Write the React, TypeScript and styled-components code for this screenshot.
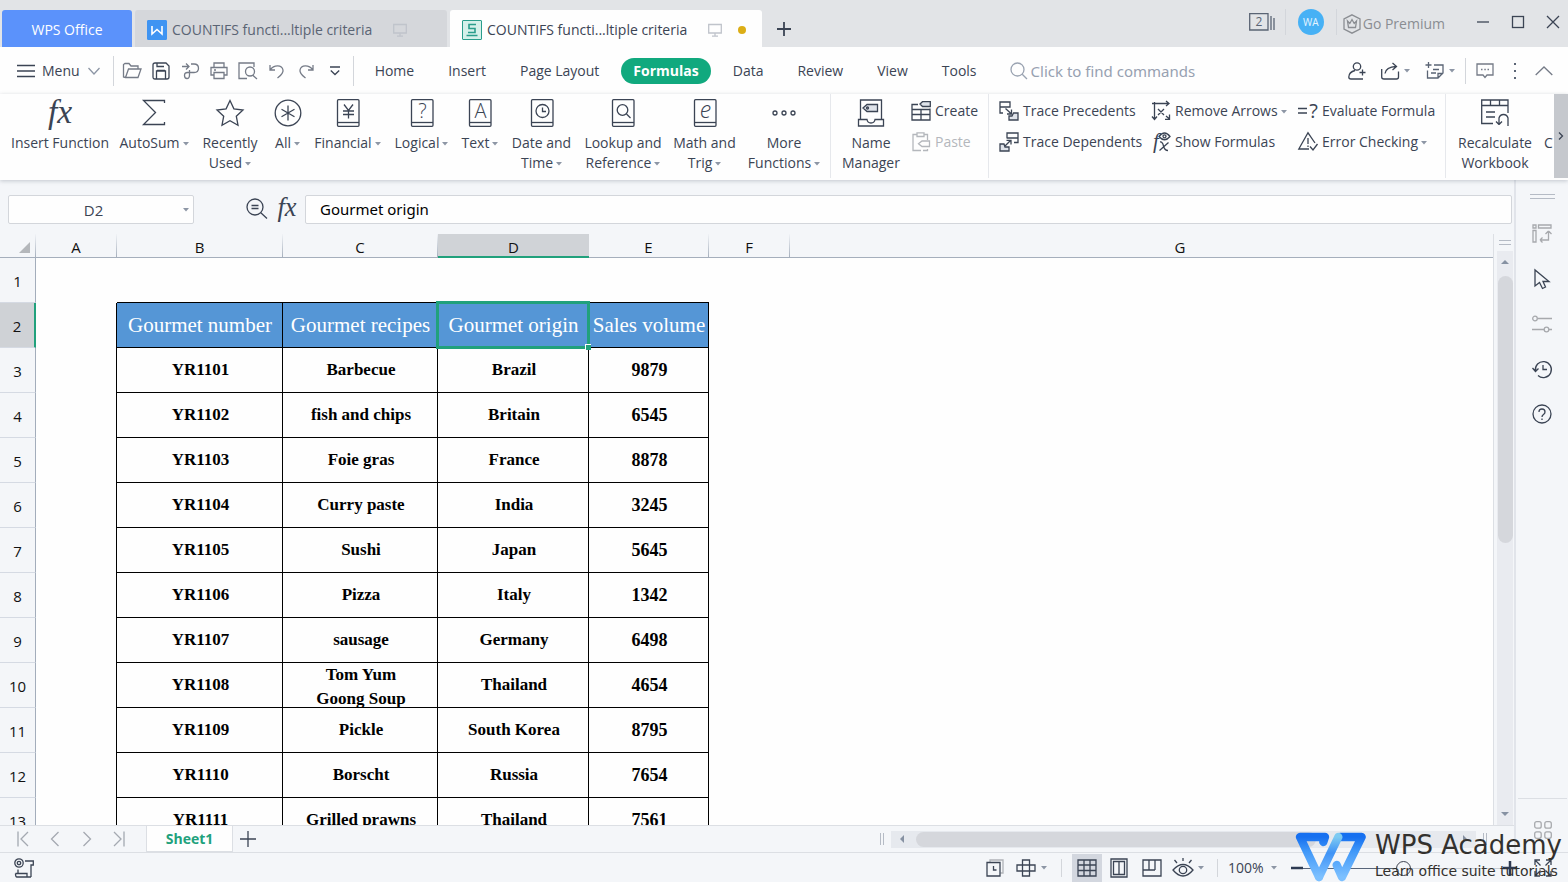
import React, { ReactNode } from 'react';
import styled, { createGlobalStyle, css } from 'styled-components';

const ui = '"Open Sans", "Noto Sans", sans-serif';
const ink = '#3b4454';
const green = '#21a17c';
const line = '#dcdfe4';

const GlobalStyle = createGlobalStyle`
  *, *::before, *::after { box-sizing: border-box; }
  body { margin: 0; background: #f4f6f9; color: ${ink}; font-family: ${ui}; font-size: 14px; line-height: 20px; overflow: hidden; }
  button, input, select { font: inherit; color: inherit; margin: 0; padding: 0; border: 0; background: none; }
  button { cursor: pointer; }
  svg { display: block; flex: none; }
`;

/* ---------- icons ---------- */

const Glyph = styled.svg`
  fill: none;
  stroke: currentColor;
  stroke-width: 1.3;
  overflow: visible;
  text {
    fill: currentColor;
    stroke: none;
    text-anchor: middle;
  }
`;

type IconProps = { w: number; h: number; children: ReactNode };
const Icon = ({ w, h, children }: IconProps) => (
  <Glyph width={w} height={h} viewBox={`0 0 ${w} ${h}`} aria-hidden="true">{children}</Glyph>
);

const CaretSvg = styled.svg`
  display: inline-block;
  vertical-align: middle;
  margin-left: 3px;
  fill: #8d96a5;
`;
const Caret = () => (
  <CaretSvg width="6" height="4" viewBox="0 0 6 4" aria-hidden="true"><path d="M0 0H6L3 3.5Z" /></CaretSvg>
);

const Monitor = () => (
  <Icon w={14} h={14}><path d="M.7 1.5H13.3V10H.7ZM7 10V13M4 13.2H10" /></Icon>
);
const Fx = ({ size = 28 }: { size?: number }) => (
  <Icon w={size} h={size}>
    <text x={size / 2} y={size * 0.84} fontSize={size * 1.2} fontStyle="italic" fontFamily="Liberation Serif, serif">fx</text>
  </Icon>
);
const Book = ({ children }: { children: ReactNode }) => (
  <Icon w={28} h={28}>
    <rect x="3.5" y=".7" width="21.5" height="26.6" rx="1" />
    <path d="M3.5 23.5H25" />
    {children}
  </Icon>
);
const BookText = ({ children, italic }: { children: string; italic?: boolean }) => (
  <Book>
    <text x="14.5" y="19" fontSize={italic ? 23 : 20} fontStyle={italic ? 'italic' : 'normal'} fontFamily="Open Sans, sans-serif" fontWeight="300">{children}</text>
  </Book>
);

const icons = {
  hamburger: <Icon w={18} h={14}><path d="M0 1.5H18M0 7H18M0 12.5H18" /></Icon>,
  chevronDown: <Icon w={12} h={8}><path d="M.5 1L6 7L11.5 1" /></Icon>,
  folder: <Icon w={20} h={18}><path d="M3.5 15.5L1.5 15V2.5L3 1.5H7L9 4H16V6.5M3.5 15.5L6.5 7H19L16 15.5Z" /></Icon>,
  save: <Icon w={18} h={18}><path d="M1 3Q1 1 3 1H14L17 4V15Q17 17 15 17H3Q1 17 1 15ZM4.5 17V9H13.5V17M5 1V4.5H12M5 8.5H13" /></Icon>,
  pdf: <Icon w={19} h={18}><path d="M1 4.500H8M5 1.500L8 4.500L5 7.500M10 2H13Q17.500 2 17.500 6.200T13 10.500H6.500Q3.500 10.500 3.500 13.500T6 16.500Q8.500 16.500 8.500 13V8" /></Icon>,
  print: <Icon w={18} h={18}><path d="M4 5V1H14V5M4 13H1V5.500H17V13H14M4 10.500H14V16.500H4ZM4 8H6" /></Icon>,
  preview: <Icon w={20} h={18}><path d="M16 5V1H1V16.500H9M14.500 13L19 17" /><circle cx="12" cy="9.500" r="4.500" /></Icon>,
  undo: <Icon w={16} h={16}><path d="M1 2V7H6M1.300 6.700C5 1.500 13 1.500 14 7C14.600 10.500 11 13 8.500 15" /></Icon>,
  redo: <Icon w={16} h={16}><path d="M15 2V7H10M14.700 6.700C11 1.500 3 1.500 2 7C1.400 10.500 5 13 7.500 15" /></Icon>,
  more: <Icon w={10} h={10}><path d="M0 1H10M.800 4.500L5 8.500L9.200 4.500" /></Icon>,
  search: <Icon w={18} h={18}><circle cx="7.500" cy="7.500" r="6.500" /><path d="M12.200 12.200L17 17" /></Icon>,
  sigma: <Icon w={28} h={28}><path d="M24.500 4V1.500H3.500L15.500 13.500L3.500 25.500H24.500V23" /></Icon>,
  star: <Icon w={28} h={28}><path d="M14 1.500L17.900 9.800L27 11L20.300 17.200L22 26.200L14 21.800L6 26.200L7.700 17.200L1 11L10.100 9.800Z" /></Icon>,
  all: <Icon w={28} h={28}><circle cx="14" cy="14" r="12.800" /><path d="M14 6.500V21.500M7.500 10.200L20.500 17.800M7.500 17.800L20.500 10.200" /></Icon>,
  yen: <Book><path d="M10 5.500L14.500 11.500L19 5.500M14.500 11.500V19.500M9 12H20M9 15.500H20" /></Book>,
  logical: <BookText>?</BookText>,
  letter: <BookText>A</BookText>,
  clock: <Book><circle cx="14.500" cy="12" r="6.500" /><path d="M14.500 8.500V12.500H18" /></Book>,
  lookup: <Book><circle cx="13.500" cy="11" r="5.300" /><path d="M17.500 15L21.500 19" /></Book>,
  math: <BookText italic>e</BookText>,
  dots: <Icon w={28} h={28}><circle cx="5" cy="14" r="2" /><circle cx="14" cy="14" r="2" /><circle cx="23" cy="14" r="2" /></Icon>,
  nameManager: <Icon w={28} h={28}><path d="M3.500 20V1H24.500V20M1.500 20.500H10Q10.500 24 14 24T18 20.500H26.500V27H1.500Z" /><path d="M6 9L10 5.500H20.500V12.500H10Z" fill="#dfe3ea" /><circle cx="10.500" cy="9" r="1" /></Icon>,
  create: <Icon w={20} h={20}><path d="M7 3.500H1V19H19V7.500M1 8.500H19M1 13.500H19M10 8.500V19" /><path d="M9 3L11.500 .700H19.300V5.500H11.500Z" fill="#dfe3ea" /></Icon>,
  paste: <Icon w={20} h={20}><path d="M6 2.500H2V18.500H10M13 2.500H16.500V8M6 .800H13V4.500H6ZM11 9H18.500V14.500H11L7.500 11.800ZM12 18.500H16.500V17" /></Icon>,
  precedents: <Icon w={20} h={20}><path d="M4 12H1V1H11V6H1M6.500 7.500L12 12.500M12.500 8.500V13H8" /><path d="M10 19V15H13L14.500 12H19V19Z" fill="#dfe3ea" /></Icon>,
  dependents: <Icon w={20} h={20}><path d="M8 6.500V1H19V10.500H15M8 6H19M6 14L11.500 8.500M7.500 8.300H12V12.500" /><path d="M1 12H5L6 15H10V19H1Z" fill="#dfe3ea" /></Icon>,
  removeArrows: <Icon w={20} h={20}><path d="M1 2.500H18M15 0L18 2.500L15 5M3.500 1V18.500M1 15.500L3.500 18.500L6 15.500M7 8L13 14M13 8L7 14M15 15L18.500 18M18.500 13.500V18.300H14" /></Icon>,
  showFormulas: <Icon w={20} h={20}><text x="5" y="16" fontSize="21" fontStyle="italic" fontFamily="Liberation Serif, serif">f</text><path d="M9 10Q11.500 9.500 12.500 14T17 18.500M17.500 10.500L8.500 18.500" /><path d="M8 4.500Q13.500-2.500 19 4.500Q13.500 11 8 4.500Z" /><circle cx="13.500" cy="4.300" r="1.500" /></Icon>,
  evaluate: <Icon w={20} h={20}><path d="M0 7.500H9M0 12H9" /><text x="15.500" y="17" fontSize="20" fontFamily="Open Sans, sans-serif">?</text></Icon>,
  errorCheck: <Icon w={20} h={20}><path d="M17 11L10 .800L.800 17H11M10 6V12M10 13.500V15M12 14.500L15 18L19.500 12" /></Icon>,
  recalc: <Icon w={28} h={28}><path d="M27 14V1H.700V24.500H12M.700 6.500H27M9.500 1V6.500M18.500 1V6.500M5 13H14M5 18H14M18 25.500L15 22.500M18 25.500L21 22.500M18 25V19Q19 15.500 22.500 15.500T27 19V27" /></Icon>,
  addUser: <Icon w={18} h={18}><circle cx="9" cy="4.500" r="3.700" /><path d="M7 8.500Q1 10 .800 15Q.800 17 3 17H15M14.500 7.500V13.500M11.500 10.500H17.500" /></Icon>,
  share: <Icon w={18} h={18}><path d="M.700 7V15Q.700 17 3 17H15.500Q17.500 17 17.500 15V9.500M4 11.500Q5 5 15 4.500M11.500 1L15.500 4.500L11.500 8" /></Icon>,
  noteAdd: <Icon w={19} h={17}><path d="M3.500 0V6M.500 3H6.500M9 3H18V11L13 16H2.500V8.500M13 16V11.500H18M8 7.500H14M6 11H11" /></Icon>,
  comment: <Icon w={18} h={16}><path d="M1 1H17V12H11L9 14.500L7 12H1Z" /><path d="M5 6.500H6.500M8.300 6.500H9.800M11.500 6.500H13" /></Icon>,
  kebab: <Icon w={4} h={18}><path d="M1 2H3M1 9H3M1 16H3" strokeWidth="2" /></Icon>,
  chevronUp: <Icon w={18} h={10}><path d="M.700 9L9 1L17.300 9" /></Icon>,
  windows: <Icon w={26} h={18}><path d="M.700 .700H19V17H.700ZM22 3V17M25 5V17" /><text x="10" y="13" fontSize="12" fontFamily="Open Sans, sans-serif">2</text></Icon>,
  crown: <Icon w={18} h={20}><path d="M9 .800L17 5V15L9 19.200L1 15V5ZM4.500 7L6.800 9.500L9 5.500L11.200 9.500L13.500 7L12.500 13.500H5.500Z" /></Icon>,
  minimize: <Icon w={14} h={14}><path d="M1 7H13" /></Icon>,
  maximize: <Icon w={14} h={14}><rect x="1.500" y="1.500" width="11" height="11" /></Icon>,
  close: <Icon w={14} h={14}><path d="M1 1L13 13M13 1L1 13" /></Icon>,
  plus: <Icon w={16} h={16}><path d="M8 0V16M0 8H16" /></Icon>,
  zoomOut: <Icon w={22} h={22}><circle cx="9" cy="9" r="8" /><path d="M14.800 14.800L21 20.500M5.500 7.500H12.500M5.500 10.500H12.500" /></Icon>,
  panelSwap: <Icon w={20} h={20}><path d="M1 1H4V4H1ZM6.500 1H19V4H6.500ZM1 6.500H4V18H1ZM16.500 7V16H8M16.500 7L13.500 10M16.500 7L19.500 10M8 16L10.500 13.500M8 16L10.500 18.500" /></Icon>,
  pointer: <Icon w={16} h={20}><path d="M1 1V17L5.500 13.500L8.500 19.500L11.500 18L9 12.500H15Z" /></Icon>,
  sliders: <Icon w={20} h={16}><circle cx="3" cy="2.500" r="2.300" /><circle cx="14.500" cy="13.500" r="2.300" /><path d="M5.500 2.500H20M0 13.500H12M17 13.500H20" /></Icon>,
  history: <Icon w={20} h={18}><path d="M3.500 11A8 8 0 1 1 6 15.500M.500 8L3.500 11.500L6.500 8.500M11 5V9.500H15" /></Icon>,
  help: <Icon w={20} h={20}><circle cx="10" cy="10" r="9" /><path d="M7 8Q7 5 10 5T13 8Q13 9.500 11.500 10.500T10 13M10 14.500V16" /></Icon>,
  apps: <Icon w={18} h={18}><rect x=".700" y=".700" width="6.500" height="6.500" rx="2" /><rect x="10.800" y=".700" width="6.500" height="6.500" rx="2" /><rect x=".700" y="10.800" width="6.500" height="6.500" rx="2" /><rect x="10.800" y="10.800" width="6.500" height="6.500" rx="2" /></Icon>,
  first: <Icon w={12} h={16}><path d="M1 .500V15.500M11 1L4 8L11 15" /></Icon>,
  prev: <Icon w={12} h={16}><path d="M9.500 1L2.500 8L9.500 15" /></Icon>,
  next: <Icon w={12} h={16}><path d="M2.500 1L9.500 8L2.500 15" /></Icon>,
  last: <Icon w={12} h={16}><path d="M11 .500V15.500M1 1L8 8L1 15" /></Icon>,
  macro: <Icon w={20} h={20}><circle cx="5" cy="5" r="4.200" /><circle cx="5" cy="5" r="1.700" /><path d="M11 3H19.300V7H17V19M4 11.500V15.500M1.500 15.500H13V19H3Q1.500 19 1.500 15.500M13 19H17" /></Icon>,
  recover: <Icon w={18} h={18}><path d="M4 3V1H17V14H14.500" stroke="#b0b3b8" /><path d="M1 3.500H14V17H1ZM7.500 7V11H10.500" /></Icon>,
  cross: <Icon w={20} h={18}><path d="M6.500 1H13.500V17H6.500ZM1 6H19V12H1Z" /></Icon>,
  grid: <Icon w={20} h={18}><path d="M1 1H19V17H1ZM1 6H19M1 11.500H19M7 1V17M13 1V17" /></Icon>,
  pages: <Icon w={18} h={20}><path d="M1 1H17V19H1ZM3.500 3.500H14.500V16.500H3.500ZM9 3.500V16.500" /></Icon>,
  breaks: <Icon w={20} h={18}><path d="M1 1H19V17H1ZM7 1V11M13 1V11M1 11H13" /></Icon>,
  eye: <Icon w={20} h={20}><path d="M0 12Q10 1 20 12Q10 24 0 12ZM10 0V3M1.500 2L4 5M18.500 2L16 5" /><circle cx="10" cy="12" r="3.700" /></Icon>,
  fullscreen: <Icon w={18} h={18}><path d="M1 6V1H6M1 1L6.500 6.500M12 1H17V6M17 1L11.500 6.500M1 12V17H6M1 17L6.500 11.500M17 12V17H12M17 17L11.500 11.500" /></Icon>,
};

/* ---------- frame ---------- */

const Window = styled.div`
  height: 100vh;
  display: flex;
  flex-direction: column;
  position: relative;
  overflow: hidden;
`;

const TitleBar = styled.header`
  display: flex;
  align-items: flex-end;
  gap: 3px;
  height: 47px;
  padding: 0 8px 0 2px;
  background: #e2e4e7;
  flex: none;
`;

const HomeTab = styled.button`
  width: 130px;
  height: 37px;
  padding-top: 2px;
  border-radius: 3px 3px 0 0;
  background: #5b92fb;
  color: #fff;
`;

const DocTab = styled.button<{ $active?: boolean }>`
  display: flex;
  align-items: center;
  width: 312px;
  height: 37px;
  padding: 2px 12px 0;
  border-radius: 3px 3px 0 0;
  background: ${p => (p.$active ? '#fefefe' : '#d5d7db')};
  color: ${p => (p.$active ? ink : '#5a6474')};
  white-space: nowrap;
  & > span { margin: 0 21px 0 5px; }
  & > svg { color: #c0c4cb; }
`;

const FileBadge = styled.i<{ $sheet?: boolean }>`
  width: 20px;
  height: 20px;
  flex: none;
  border-radius: 1px;
  border: 1px solid ${p => (p.$sheet ? '#2a9d8c' : '#3f94f2')};
  background: ${p => (p.$sheet ? '#d5f0ea' : '#3f94f2')};
  color: ${p => (p.$sheet ? '#2a9d8c' : '#fff')};
`;

const Unsaved = styled.i`
  width: 8px;
  height: 8px;
  margin-left: 16px;
  border-radius: 50%;
  background: #dcae16;
`;

const IconButton = styled.button<{ $w?: number; $tone?: string; $on?: boolean }>`
  display: flex;
  align-items: center;
  justify-content: center;
  gap: 2px;
  flex: none;
  min-width: ${p => p.$w ?? 28}px;
  align-self: stretch;
  color: ${p => p.$tone ?? ink};
  background: ${p => (p.$on ? '#d3d7df' : 'none')};
`;

const WindowTools = styled.div`
  display: flex;
  align-items: center;
  align-self: flex-start;
  height: 44px;
  margin-left: auto;
`;

const Avatar = styled.button`
  width: 26px;
  height: 26px;
  margin: 0 12px;
  border-radius: 50%;
  background: #47b1f5;
  color: #e6f5ff;
  font-size: 10px;
`;

const Premium = styled.button`
  display: flex;
  align-items: center;
  gap: 2px;
  margin: 3px 31px 0 6px;
  color: #8a8d92;
`;

const WindowButtons = styled.div`
  display: flex;
  gap: 21px;
`;

const Rule = styled.i<{ $h?: number }>`
  width: 1px;
  height: ${p => p.$h ?? 26}px;
  flex: none;
  background: #d3d6db;
`;

/* ---------- menu bar ---------- */

const MenuBar = styled.nav`
  display: flex;
  align-items: center;
  height: 47px;
  padding: 0 6px 0 17px;
  background: #fefefe;
  flex: none;
`;

const MenuButton = styled.button`
  display: flex;
  align-items: center;
  gap: 7px;
  margin-right: 13px;
  & > svg:last-child { margin-left: 1px; color: #8d96a5; }
`;

const QuickTools = styled.div`
  display: flex;
  height: 26px;
  margin: 0 3px 0 4px;
`;

const Tabs = styled.div`
  display: flex;
  gap: 10px;
  margin-left: 9px;
`;

const Tab = styled.button<{ $active?: boolean }>`
  height: 26px;
  padding: 0 12px;
  border-radius: 13px;
  white-space: nowrap;
  ${p => p.$active && css`
    background: #11a97e;
    color: #fff;
    font-weight: 700;
  `}
`;

const Search = styled.label`
  display: flex;
  align-items: center;
  gap: 3px;
  flex: 1;
  min-width: 0;
  margin-left: 21px;
  color: #9aa3b1;
  font-family: "Noto Sans", sans-serif;
  font-size: 15px;
  input { flex: 1; min-width: 0; outline: 0; }
  input::placeholder { color: #97a1b1; opacity: 1; }
`;

const MenuRight = styled.div`
  display: flex;
  align-items: center;
  height: 26px;
`;

/* ---------- ribbon ---------- */

const Ribbon = styled.section`
  display: flex;
  height: 86px;
  padding-left: 6px;
  background: #fefefe;
  box-shadow: 0 1px 4px rgba(80, 90, 105, 0.3);
  flex: none;
  position: relative;
`;

const BigButton = styled.button<{ $w: number }>`
  display: flex;
  flex-direction: column;
  align-items: center;
  flex: none;
  width: ${p => p.$w}px;
  padding-top: 5px;
  white-space: nowrap;
  & > span { margin-top: 6px; }
`;

const RibbonRule = styled(Rule)`
  height: 84px;
  margin: 0 5px;
  background: #e6e8ec;
`;

const SmallColumn = styled.div<{ $w: number; $inset?: boolean }>`
  display: flex;
  flex-direction: column;
  flex: none;
  width: ${p => p.$w}px;
  padding: 1px 0 0 ${p => (p.$inset ? 5 : 0)}px;
`;

const SmallButton = styled.button`
  display: flex;
  align-items: center;
  gap: 4px;
  height: 31px;
  white-space: nowrap;
  &:disabled { color: #b4b7bc; }
`;

const Clipped = styled.div`
  flex: 1;
  min-width: 0;
  padding: 39px 0 0 5px;
  overflow: hidden;
  white-space: nowrap;
`;

const RibbonScroll = styled.button`
  display: flex;
  align-items: center;
  justify-content: center;
  width: 14px;
  height: 84px;
  flex: none;
  && { background: #c5c8cd; }
`;

/* ---------- work area ---------- */

const Work = styled.main`
  display: flex;
  flex: 1;
  min-height: 0;
`;

const SheetPane = styled.div`
  display: flex;
  flex-direction: column;
  flex: 1;
  min-width: 0;
  border-right: 2px solid #e1e4ea;
`;

const FormulaBar = styled.div`
  display: flex;
  align-items: center;
  height: 54px;
  padding: 4px 2px 0 8px;
  flex: none;
`;

const NameBox = styled.div`
  display: flex;
  align-items: center;
  width: 186px;
  height: 29px;
  padding-right: 4px;
  border: 1px solid #d3d6db;
  border-radius: 2px;
  background: #fefefe;
  input { flex: 1; min-width: 0; padding: 2px 2px 0 0; text-align: center; font-size: 15px; }
`;

const FormulaTools = styled.div`
  display: flex;
  align-items: center;
  gap: 8px;
  margin: 0 7px 0 52px;
  button { display: flex; }
`;

const FormulaInput = styled.input`
  && {
    flex: 1;
    min-width: 0;
    height: 29px;
    padding: 0 14px;
    border: 1px solid #d3d6db;
    border-radius: 2px;
    background: #fefefe;
    color: #000;
    font-family: "Noto Sans", sans-serif;
    font-size: 15px;
  }
`;

const GridArea = styled.div`
  display: flex;
  flex: 1;
  min-height: 0;
`;

const GridClip = styled.div`
  flex: 1;
  min-width: 0;
  overflow: hidden;
  background: linear-gradient(#f4f6f9 24px, #fefefe 24px);
  border-right: 1px solid ${line};
`;

const Sheet = styled.table`
  table-layout: fixed;
  width: 1571px;
  border-collapse: separate;
  border-spacing: 0;
  th, td { padding: 0; }
  th { padding-top: 2px; font-size: 15px; font-weight: 400; color: #111; }
`;

const ColHead = styled.th<{ $on?: boolean }>`
  height: 24px;
  border-bottom: 1px solid #a3adbb;
  border-right: 1px solid;
  border-image: linear-gradient(#f4f6f9, #a3adbb) 1;
  background: #f4f6f9;
  ${p => p.$on && css`
    border: 0;
    background: #d0d3d7;
    box-shadow: inset 0 -2px ${green};
  `}
`;

const Corner = styled(ColHead)`
  svg { margin: 2px 5px 0 auto; fill: #b4b7bb; }
`;

const RowHead = styled.th<{ $on?: boolean }>`
  height: 45px;
  border-right: 1px solid #a3adbb;
  border-bottom: 1px solid #d5dae3;
  background: #f4f6f9;
  ${p => p.$on && css`
    border-right: 2px solid ${green};
    background: #cfd2d6;
  `}
`;

const edge = '1px solid #000';
const Cell = styled.td<{ $right?: boolean; $bottom?: boolean; $header?: boolean; $size: number }>`
  position: relative;
  height: 45px;
  color: #000;
  font-family: "Liberation Serif", serif;
  font-weight: 700;
  font-size: ${p => p.$size}px;
  line-height: 24px;
  text-align: center;
  border-right: ${p => (p.$right ? edge : '0')};
  border-bottom: ${p => (p.$bottom ? edge : '0')};
  ${p => p.$header && css`
    color: #fff;
    background: #5596d6;
    font-weight: 400;
    font-size: 21px;
    white-space: nowrap;
  `}
`;

const CellText = styled.div<{ $tight?: boolean }>`
  display: flex;
  align-items: safe center;
  justify-content: center;
  height: 44px;
  padding: 0 ${p => (p.$tight ? 0 : 15)}px 0 ${p => (p.$tight ? 1 : 17)}px;
  overflow: hidden;
`;

const Selection = styled.i`
  position: absolute;
  inset: -2px;
  border: 3px solid ${green};
  z-index: 1;
  &::after {
    content: '';
    position: absolute;
    right: -4px;
    bottom: -4px;
    width: 6px;
    height: 6px;
    background: ${green};
    border: 1px solid #fff;
    border-width: 1px 0 0 1px;
  }
`;

const VScroll = styled.div`
  display: flex;
  flex-direction: column;
  align-items: center;
  width: 20px;
  flex: none;
  padding: 6px 1px 0 3px;
`;

const Grip = styled.i<{ $vertical?: boolean }>`
  flex: none;
  border: solid #b5bbc5;
  ${p => (p.$vertical
    ? css`width: 4px; height: 12px; border-width: 0 1px;`
    : css`width: 12px; height: 5px; border-width: 1px 0;`)}
`;

const VTrack = styled.div`
  display: flex;
  flex-direction: column;
  align-items: center;
  flex: 1;
  width: 16px;
  margin-top: 6px;
  padding: 9px 0;
  background: #e9ebf0;
  fill: #8691a2;
`;

const VThumb = styled.div`
  width: 15px;
  height: 48%;
  margin: 12px 0 auto;
  border-radius: 8px;
  background: #d5d7dc;
`;

const SheetBar = styled.div`
  display: flex;
  align-items: center;
  height: 28px;
  flex: none;
  border-top: 1px solid ${line};
  border-bottom: 1px solid ${line};
`;

const SheetNav = styled.div`
  display: flex;
  gap: 20px;
  width: 146px;
  padding-left: 17px;
  button { display: flex; color: #a4a9b1; }
`;

const SheetTab = styled.button`
  width: 87px;
  align-self: stretch;
  && {
    border: 1px solid ${line};
    border-top: 0;
    background: #fefefe;
    color: ${green};
    font-weight: 700;
  }
`;

const SheetScroll = styled.div`
  display: flex;
  align-items: center;
  margin: 0 27px 0 auto;
`;

const HTrack = styled.div`
  display: flex;
  align-items: center;
  width: 585px;
  height: 17px;
  margin: 0 7px;
  padding: 0 9px;
  background: #e6e9ee;
  fill: #8691a2;
`;

const HThumb = styled.div`
  width: 400px;
  height: 15px;
  margin: 0 auto 0 12px;
  border-radius: 8px;
  background: #d5d7dc;
`;

const SidePanel = styled.aside`
  display: flex;
  flex-direction: column;
  align-items: center;
  width: 52px;
  flex: none;
  padding-top: 14px;
  border-bottom: 1px solid ${line};
  & > ${Grip} { width: 25px; margin-bottom: 12px; }
`;

const SideButton = styled.button<{ $muted?: boolean }>`
  display: flex;
  align-items: center;
  justify-content: center;
  width: 40px;
  height: 45px;
  color: ${p => (p.$muted ? '#a7a9ad' : ink)};
`;

const SideFooter = styled.div`
  width: 49px;
  margin-top: auto;
  padding: 8px 0 0 5px;
  border-top: 1px solid ${line};
`;

/* ---------- status bar ---------- */

const StatusBar = styled.footer`
  display: flex;
  align-items: center;
  height: 29px;
  padding: 0 0 0 10px;
  flex: none;
`;

const StatusTools = styled.div`
  display: flex;
  align-items: center;
  align-self: stretch;
  margin-left: auto;
  padding-top: 1px;
`;

const StatusRule = styled(Rule)`
  height: 18px;
  margin: 0 10px 0 8px;
`;

const ZoomSelect = styled.label`
  display: flex;
  align-items: center;
  width: 63px;
  select { appearance: none; width: 40px; }
`;

const ZoomStep = styled.button`
  display: flex;
  color: #2d3a52;
`;

const ZoomSlider = styled.input`
  && {
    appearance: none;
    width: 200px;
    height: 16px;
    background: linear-gradient(90deg, #58657a 50%, #c9cdd4 50%) center / 100% 1px no-repeat;
  }
  &::-webkit-slider-thumb {
    appearance: none;
    width: 15px;
    height: 15px;
    border: 1px solid #3d4350;
    border-radius: 50%;
    background: #f4f6f9;
  }
`;

const Watermark = styled.div`
  position: absolute;
  right: 7px;
  bottom: 0;
  display: flex;
  align-items: flex-end;
  gap: 8px;
  color: #33312e;
  pointer-events: none;
`;

const WatermarkText = styled.div`
  width: 186px;
  white-space: nowrap;
  strong {
    display: block;
    font: 400 26px/32px "DejaVu Sans", sans-serif;
  }
  span {
    display: block;
    font: 400 14px/21px "DejaVu Sans", sans-serif;
  }
`;

const AcademyLogo = () => (
  <svg width="72" height="50" viewBox="14 15 216 150" fill="none" strokeLinejoin="round" strokeLinecap="round" strokeWidth="25" aria-hidden="true">
    <defs>
      <linearGradient id="deep" gradientUnits="userSpaceOnUse" x1="0" y1="30" x2="0" y2="150">
        <stop offset="0" stopColor="#1670f0" /><stop offset=".35" stopColor="#3f97f8" /><stop offset="1" stopColor="#7cc0ff" />
      </linearGradient>
      <linearGradient id="pale" gradientUnits="userSpaceOnUse" x1="0" y1="30" x2="0" y2="150">
        <stop offset="0" stopColor="#7ecbf2" /><stop offset=".4" stopColor="#3f93f6" /><stop offset="1" stopColor="#7cc0ff" />
      </linearGradient>
    </defs>
    <path d="M155 150L214 30H150M155 150L139 114" stroke="url(#deep)" />
    <path d="M86 150L144 30" stroke="url(#pale)" />
    <path d="M86 150L29 30H104L99 45" stroke="url(#deep)" />
  </svg>
);

/* ---------- data ---------- */

const columns = [
  { id: 'A', width: 81, size: 17 }, { id: 'B', width: 166, size: 17 }, { id: 'C', width: 155, size: 17 },
  { id: 'D', width: 151, size: 17 }, { id: 'E', width: 120, size: 18 }, { id: 'F', width: 81, size: 17 },
  { id: 'G', width: 781, size: 17 },
];

const rows: string[][] = [
  [],
  ['Gourmet number', 'Gourmet recipes', 'Gourmet origin', 'Sales volume'],
  ['YR1101', 'Barbecue', 'Brazil', '9879'],
  ['YR1102', 'fish and chips', 'Britain', '6545'],
  ['YR1103', 'Foie gras', 'France', '8878'],
  ['YR1104', 'Curry paste', 'India', '3245'],
  ['YR1105', 'Sushi', 'Japan', '5645'],
  ['YR1106', 'Pizza', 'Italy', '1342'],
  ['YR1107', 'sausage', 'Germany', '6498'],
  ['YR1108', 'Tom Yum Goong Soup', 'Thailand', '4654'],
  ['YR1109', 'Pickle', 'South Korea', '8795'],
  ['YR1110', 'Borscht', 'Russia', '7654'],
  ['YR1111', 'Grilled prawns', 'Thailand', '7561'],
];

type Big = { icon: ReactNode; lines: string[]; w: number; caret?: boolean };
const functions: Big[] = [
  { icon: <Fx />, lines: ['Insert Function'], w: 108 },
  { icon: icons.sigma, lines: ['AutoSum'], w: 80, caret: true },
  { icon: icons.star, lines: ['Recently', 'Used'], w: 72, caret: true },
  { icon: icons.all, lines: ['All'], w: 43, caret: true },
  { icon: icons.yen, lines: ['Financial'], w: 77, caret: true },
  { icon: icons.logical, lines: ['Logical'], w: 71, caret: true },
  { icon: icons.letter, lines: ['Text'], w: 46, caret: true },
  { icon: icons.clock, lines: ['Date and', 'Time'], w: 77, caret: true },
  { icon: icons.lookup, lines: ['Lookup and', 'Reference'], w: 86, caret: true },
  { icon: icons.math, lines: ['Math and', 'Trig'], w: 77, caret: true },
  { icon: icons.dots, lines: ['More', 'Functions'], w: 82, caret: true },
];

const RibbonButton = ({ icon, lines, w, caret }: Big) => (
  <BigButton $w={w}>
    {icon}
    <span>
      {lines.map((t, i) => (
        <React.Fragment key={t}>{i > 0 && <br />}{t}</React.Fragment>
      ))}
      {caret && <Caret />}
    </span>
  </BigButton>
);

const quick: [string, ReactNode, string?][] = [
  ['Open', icons.folder], ['Save', icons.save, ink], ['Export to PDF', icons.pdf], ['Print', icons.print],
  ['Print preview', icons.preview], ['Undo', icons.undo], ['Redo', icons.redo],
];

const menuTabs = ['Home', 'Insert', 'Page Layout', 'Formulas', 'Data', 'Review', 'View', 'Tools'];

export default function App() {
  return (
    <Window>
      <GlobalStyle />
      <TitleBar>
        <HomeTab>WPS Office</HomeTab>
        <DocTab>
          <FileBadge><Icon w={18} h={18}><path d="M4 5V13L9 8.500L14 13V5" strokeWidth="1.600" /></Icon></FileBadge>
          <span>COUNTIFS functi...ltiple criteria</span>
          <Monitor />
        </DocTab>
        <DocTab $active>
          <FileBadge $sheet><Icon w={18} h={18}><path d="M13 3.500H6V7.500H12V11.500H5M3.500 14.500H14.500" strokeWidth="1.600" /></Icon></FileBadge>
          <span>COUNTIFS functi...ltiple criteria</span>
          <Monitor />
          <Unsaved />
        </DocTab>
        <IconButton $w={38} aria-label="New tab"><Icon w={14} h={34}><path d="M7 15V29M0 22H14" strokeWidth="1.800" /></Icon></IconButton>
        <WindowTools>
          <IconButton $w={46} aria-label="Open windows" $tone="#5a6474">{icons.windows}</IconButton>
          <Rule />
          <Avatar>WA</Avatar>
          <Rule />
          <Premium>{icons.crown}Go Premium</Premium>
          <WindowButtons>
            <button aria-label="Minimize">{icons.minimize}</button>
            <button aria-label="Maximize">{icons.maximize}</button>
            <button aria-label="Close">{icons.close}</button>
          </WindowButtons>
        </WindowTools>
      </TitleBar>

      <MenuBar>
        <MenuButton>{icons.hamburger}Menu{icons.chevronDown}</MenuButton>
        <Rule $h={30} />
        <QuickTools>
          {quick.map(([name, icon, tone]) => (
            <IconButton key={name} $w={29} $tone={tone ?? '#757b87'} aria-label={name}>{icon}</IconButton>
          ))}
          <IconButton $w={29} aria-label="More quick tools">{icons.more}</IconButton>
        </QuickTools>
        <Rule $h={30} />
        <Tabs>
          {menuTabs.map(t => <Tab key={t} $active={t === 'Formulas'}>{t}</Tab>)}
        </Tabs>
        <Search>
          {icons.search}
          <input type="search" placeholder="Click to find commands" aria-label="Click to find commands" />
        </Search>
        <MenuRight>
          <IconButton $w={36} aria-label="Invite">{icons.addUser}</IconButton>
          <IconButton $w={40} aria-label="Share">{icons.share}<Caret /></IconButton>
          <IconButton $w={50} $tone="#5a6474" aria-label="Add note">{icons.noteAdd}<Caret /></IconButton>
          <Rule />
          <IconButton $w={38} $tone="#757b87" aria-label="Comments">{icons.comment}</IconButton>
          <IconButton $w={22} $tone="#5a6474" aria-label="Options">{icons.kebab}</IconButton>
          <IconButton $w={36} $tone="#757b87" aria-label="Collapse ribbon">{icons.chevronUp}</IconButton>
        </MenuRight>
      </MenuBar>

      <Ribbon>
        {functions.map(f => <RibbonButton key={f.lines[0]} {...f} />)}
        <RibbonRule />
        <RibbonButton icon={icons.nameManager} lines={['Name', 'Manager']} w={70} />
        <SmallColumn $w={77} $inset>
          <SmallButton>{icons.create}Create</SmallButton>
          <SmallButton disabled>{icons.paste}Paste</SmallButton>
        </SmallColumn>
        <RibbonRule />
        <SmallColumn $w={157} $inset>
          <SmallButton>{icons.precedents}Trace Precedents</SmallButton>
          <SmallButton>{icons.dependents}Trace Dependents</SmallButton>
        </SmallColumn>
        <SmallColumn $w={147}>
          <SmallButton>{icons.removeArrows}<span>Remove Arrows<Caret /></span></SmallButton>
          <SmallButton>{icons.showFormulas}Show Formulas</SmallButton>
        </SmallColumn>
        <SmallColumn $w={142}>
          <SmallButton>{icons.evaluate}Evaluate Formula</SmallButton>
          <SmallButton>{icons.errorCheck}<span>Error Checking<Caret /></span></SmallButton>
        </SmallColumn>
        <RibbonRule />
        <RibbonButton icon={icons.recalc} lines={['Recalculate', 'Workbook']} w={88} />
        <Clipped>C</Clipped>
        <RibbonScroll aria-label="Scroll ribbon"><Icon w={6} h={8}><path d="M1 .500L4.500 4L1 7.500" /></Icon></RibbonScroll>
      </Ribbon>

      <Work>
        <SheetPane>
          <FormulaBar>
            <NameBox><input aria-label="Name box" defaultValue="D2" /><button aria-label="Named ranges"><Caret /></button></NameBox>
            <FormulaTools>
              <button aria-label="Browse formula">{icons.zoomOut}</button>
              <button aria-label="Insert function"><Fx size={22} /></button>
            </FormulaTools>
            <FormulaInput aria-label="Formula" defaultValue="Gourmet origin" />
          </FormulaBar>
          <GridArea>
            <GridClip>
              <Sheet>
                <colgroup>
                  <col width={36} />
                  {columns.map(c => <col key={c.id} width={c.width} />)}
                </colgroup>
                <thead>
                  <tr>
                    <Corner aria-label="Select all"><svg width="11" height="11"><path d="M11 0V11H0Z" /></svg></Corner>
                    {columns.map(c => <ColHead key={c.id} scope="col" $on={c.id === 'D'}>{c.id}</ColHead>)}
                  </tr>
                </thead>
                <tbody>
                  {rows.map((r, i) => (
                    <tr key={i}>
                      <RowHead scope="row" $on={i === 1}>{i + 1}</RowHead>
                      {columns.map((c, j) => {
                        const text = r[j - 1];
                        const inTable = j > 0 && j < 5;
                        return (
                          <Cell
                            key={c.id}
                            $size={c.size}
                            $right={i > 0 && j < 5}
                            $bottom={inTable}
                            $header={i === 1 && inTable}
                          >
                            {text && <CellText $tight={i === 1}>{text}</CellText>}
                            {i === 1 && c.id === 'D' && <Selection />}
                          </Cell>
                        );
                      })}
                    </tr>
                  ))}
                </tbody>
              </Sheet>
            </GridClip>
            <VScroll>
              <Grip />
              <VTrack>
                <svg width="8" height="4"><path d="M0 4L4 0L8 4Z" /></svg>
                <VThumb />
                <svg width="8" height="4"><path d="M0 0H8L4 4Z" /></svg>
              </VTrack>
            </VScroll>
          </GridArea>
          <SheetBar>
            <SheetNav>
              <button aria-label="First sheet">{icons.first}</button>
              <button aria-label="Previous sheet">{icons.prev}</button>
              <button aria-label="Next sheet">{icons.next}</button>
              <button aria-label="Last sheet">{icons.last}</button>
            </SheetNav>
            <SheetTab>Sheet1</SheetTab>
            <IconButton $w={30} aria-label="Add sheet">{icons.plus}</IconButton>
            <SheetScroll>
              <Grip $vertical />
              <HTrack>
                <svg width="4" height="8"><path d="M4 0V8L0 4Z" /></svg>
                <HThumb />
                <svg width="4" height="8"><path d="M0 0V8L4 4Z" /></svg>
              </HTrack>
              <Grip $vertical />
            </SheetScroll>
          </SheetBar>
        </SheetPane>
        <SidePanel>
          <Grip />
          <SideButton $muted aria-label="Switch panel">{icons.panelSwap}</SideButton>
          <SideButton aria-label="Selection pane">{icons.pointer}</SideButton>
          <SideButton $muted aria-label="Settings">{icons.sliders}</SideButton>
          <SideButton aria-label="History">{icons.history}</SideButton>
          <SideButton aria-label="Help">{icons.help}</SideButton>
          <SideFooter><SideButton $muted aria-label="Apps">{icons.apps}</SideButton></SideFooter>
        </SidePanel>
      </Work>

      <StatusBar>
        <IconButton aria-label="Record macro">{icons.macro}</IconButton>
        <StatusTools>
          <IconButton $w={30} aria-label="Recover">{icons.recover}</IconButton>
          <IconButton $w={43} aria-label="Reading layout">{icons.cross}<Caret /></IconButton>
          <StatusRule />
          <IconButton $w={30} $on aria-label="Normal view">{icons.grid}</IconButton>
          <IconButton $w={33} aria-label="Page layout view">{icons.pages}</IconButton>
          <IconButton $w={33} aria-label="Page break view">{icons.breaks}</IconButton>
          <IconButton $w={41} aria-label="Eye protection">{icons.eye}<Caret /></IconButton>
          <StatusRule />
          <ZoomSelect>
            <select aria-label="Zoom level" defaultValue="100%"><option>100%</option></select>
            <Caret />
          </ZoomSelect>
          <ZoomStep aria-label="Zoom out"><Icon w={12} h={12}><path d="M0 6H12" strokeWidth="2.500" /></Icon></ZoomStep>
          <ZoomSlider type="range" min={0} max={100} defaultValue={50} aria-label="Zoom" />
          <ZoomStep aria-label="Zoom in"><Icon w={14} h={14}><path d="M0 7H14M7 0V14" strokeWidth="2.500" /></Icon></ZoomStep>
          <IconButton $w={51} aria-label="Full screen">{icons.fullscreen}</IconButton>
        </StatusTools>
      </StatusBar>

      <Watermark>
        <AcademyLogo />
        <WatermarkText>
          <strong>WPS Academy</strong>
          <span>Learn office suite tutorials</span>
        </WatermarkText>
      </Watermark>
    </Window>
  );
}
